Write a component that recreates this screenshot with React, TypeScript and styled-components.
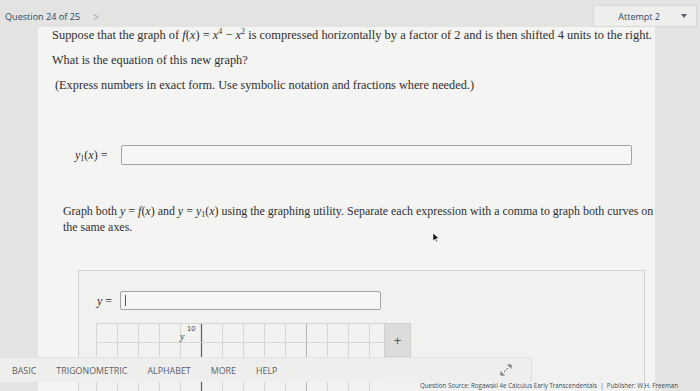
import React from "react";
import styled, { createGlobalStyle } from "styled-components";

const GlobalStyle = createGlobalStyle`
  html, body {
    margin: 0;
    padding: 0;
    width: 700px;
    height: 391px;
    overflow: hidden;
    background: #e3e3e1;
  }
  * { box-sizing: border-box; }
`;

const Page = styled.div`
  position: relative;
  width: 700px;
  height: 391px;
  overflow: hidden;
  display: flex;
  flex-direction: column;
  font-family: "Liberation Serif", "Times New Roman", serif;
  color: #2f2f2f;
`;

const Header = styled.div`
  height: 27px;
  display: flex;
  align-items: center;
  justify-content: space-between;
  padding: 0 3px 0 5px;
  font-family: "Open Sans", "Liberation Sans", sans-serif;
`;

const QuestionNav = styled.div`
  display: flex;
  align-items: center;
  gap: 13px;
  font-size: 9.1px;
  color: #2c4a68;
  padding-top: 6px;
`;

const Chevron = styled.span`
  color: #9aa3ad;
  font-size: 11px;
`;

const AttemptBox = styled.div`
  width: 104px;
  height: 22px;
  margin-top: 5px;
  display: flex;
  align-items: center;
  justify-content: flex-end;
  gap: 21px;
  padding-right: 9px;
  background: #eeeeec;
  border: 1px solid #d8d8d6;
  font-size: 9px;
  color: #2c4a68;
`;

const Caret = styled.span`
  width: 0;
  height: 0;
  border-left: 3px solid transparent;
  border-right: 3px solid transparent;
  border-top: 4px solid #55606b;
`;

const Body = styled.div`
  flex: 1;
  display: flex;
`;

const Gutter = styled.div<{ $w: number }>`
  width: ${(p) => p.$w}px;
  flex-shrink: 0;
`;

const Panel = styled.div`
  width: 617px;
  background: #f4f4f2;
  padding: 0 0 0 14px;
  display: flex;
  flex-direction: column;
`;

const Para = styled.p<{ $mt?: number; $ml?: number; $fs?: number }>`
  margin: ${(p) => p.$mt ?? 0}px 0 0 ${(p) => p.$ml ?? 0}px;
  font-size: ${(p) => p.$fs ?? 12.3}px;
  line-height: 16px;
  height: 16px;
  white-space: nowrap;
`;

const I = styled.i`
  font-style: italic;
`;

const Sup = styled.sup`
  font-size: 8px;
  line-height: 0;
  vertical-align: 0;
  position: relative;
  top: -5px;
`;

const Sub = styled.sub`
  font-size: 8px;
  line-height: 0;
  vertical-align: 0;
  position: relative;
  top: 2px;
`;

const AnswerRow = styled.div`
  margin: 52px 0 0 23px;
  display: flex;
  align-items: center;
  gap: 14px;
`;

const MathLabel = styled.span`
  font-size: 12px;
  line-height: 16px;
  white-space: nowrap;
`;

const Input = styled.div<{ $w: number; $h: number }>`
  width: ${(p) => p.$w}px;
  height: ${(p) => p.$h}px;
  border: 1.5px solid #a3a3a1;
  border-radius: 2px;
  background: #f6f6f4;
  display: flex;
  align-items: center;
  padding-left: 4px;
`;

const TextCaret = styled.span`
  width: 1px;
  height: 11px;
  background: #555;
`;

const GraphText = styled.div`
  margin: 38px 0 0 11px;
`;

const GraphBox = styled.div`
  margin: 35px 0 0 26px;
  width: 567px;
  flex: 1;
  border: 1px solid #d2d2d0;
  border-bottom: none;
  background: #f1f1ef;
  padding: 20px 0 0 17px;
  display: flex;
  flex-direction: column;
`;

const EqRow = styled.div`
  display: flex;
  align-items: center;
  gap: 8px;
  padding-left: 1px;
`;

const GridWrap = styled.div`
  margin-top: 13px;
  display: flex;
`;

const PlusButton = styled.div`
  width: 27px;
  height: 34px;
  background: #dcdcda;
  border: 1px solid #cfcfcd;
  display: flex;
  align-items: center;
  justify-content: center;
  font-family: "Liberation Sans", sans-serif;
  font-size: 13px;
  color: #555;
`;

const Toolbar = styled.div`
  position: absolute;
  left: 0;
  top: 357px;
  width: 532px;
  height: 25px;
  background: #eeeeec;
  border-top: 1px solid #e2e2e0;
  border-right: 1px solid #dcdcda;
  display: flex;
  align-items: center;
  padding: 0 18px 0 12px;
  gap: 20px;
  font-family: "Open Sans", "Liberation Sans", sans-serif;
  font-size: 8.9px;
  color: #5a5f66;
`;

const Spacer = styled.div`
  flex: 1;
`;

const Source = styled.div`
  position: absolute;
  left: 420px;
  top: 381px;
  font-family: "Open Sans", "Liberation Sans", sans-serif;
  font-size: 6.2px;
  color: #3e4a58;
  white-space: nowrap;
`;

const Pointer = styled.svg`
  position: absolute;
  left: 432px;
  top: 232px;
`;

const Grid = () => {
  const cols = 15;
  const cw = 21;
  const w = cols * cw;
  const h = 70;
  const lines = [];
  for (let i = 0; i <= cols; i++) {
    const x = i * cw + 0.5;
    const axis = i === 5;
    const major = i === 10;
    lines.push(
      <line
        key={"v" + i}
        x1={x}
        y1={0}
        x2={x}
        y2={h}
        stroke={axis ? "#5a5a5a" : major ? "#b4b4b2" : "#d6d6d4"}
        strokeWidth={axis ? 1.2 : 1}
      />
    );
  }
  for (let j = 0; j <= 3; j++) {
    const y = j * 19 + 0.5;
    lines.push(<line key={"h" + j} x1={0} y1={y} x2={w} y2={y} stroke="#d6d6d4" />);
  }
  return (
    <svg width={w - 27} height={h} viewBox={`0 0 ${w - 27} ${h}`}>
      <rect x={0} y={0} width={w} height={h} fill="#f2f2f0" />
      {lines}
      <text x={91} y={8} fontSize="7.5" fontFamily="Liberation Sans, sans-serif" fill="#444">10</text>
      <text x={84} y={17} fontSize="10" fontStyle="italic" fontFamily="Liberation Serif, serif" fill="#444">y</text>
    </svg>
  );
};

const ExpandIcon = () => (
  <svg width="14" height="14" viewBox="0 0 14 14" fill="none" stroke="#555" strokeWidth="1">
    <line x1="2.5" y1="11.5" x2="11.5" y2="2.5" strokeDasharray="2 1.5" />
    <path d="M2 8.5 L2 12 L5.5 12" />
    <path d="M8.5 2 L12 2 L12 5.5" />
  </svg>
);

export default function App() {
  return (
    <>
      <GlobalStyle />
      <Page>
        <Header>
          <QuestionNav>
            <span>Question 24 of 25</span>
            <Chevron>&gt;</Chevron>
          </QuestionNav>
          <AttemptBox>
            <span>Attempt 2</span>
            <Caret />
          </AttemptBox>
        </Header>
        <Body>
          <Gutter $w={38} />
          <Panel>
            <Para $fs={12.45}>
              Suppose that the graph of <I>f</I>(<I>x</I>)&nbsp;=&nbsp;<I>x</I>
              <Sup>4</Sup>&nbsp;−&nbsp;<I>x</I>
              <Sup>2</Sup> is compressed horizontally by a factor of 2 and is then shifted 4 units to the
              right.
            </Para>
            <Para $mt={9}>What is the equation of this new graph?</Para>
            <Para $mt={9} $ml={3}>
              (Express numbers in exact form. Use symbolic notation and fractions where needed.)
            </Para>
            <AnswerRow>
              <MathLabel>
                <I>y</I>
                <Sub>1</Sub>(<I>x</I>) =
              </MathLabel>
              <Input $w={511} $h={20} />
            </AnswerRow>
            <GraphText>
              <Para $fs={11.95}>
                Graph both <I>y</I>&nbsp;=&nbsp;<I>f</I>(<I>x</I>) and <I>y</I>&nbsp;=&nbsp;<I>y</I>
                <Sub>1</Sub>(<I>x</I>) using the graphing utility. Separate each expression with a comma to
                graph both curves on
              </Para>
              <Para $fs={11.95}>the same axes.</Para>
            </GraphText>
            <GraphBox>
              <EqRow>
                <MathLabel>
                  <I>y</I> =
                </MathLabel>
                <Input $w={261} $h={19}>
                  <TextCaret />
                </Input>
              </EqRow>
              <GridWrap>
                <Grid />
                <PlusButton>+</PlusButton>
              </GridWrap>
            </GraphBox>
          </Panel>
          <Gutter $w={45} />
        </Body>
        <Toolbar>
          <span>BASIC</span>
          <span>TRIGONOMETRIC</span>
          <span>ALPHABET</span>
          <span>MORE</span>
          <span>HELP</span>
          <Spacer />
          <ExpandIcon />
        </Toolbar>
        <Source>
          Question Source: Rogawski 4e Calculus Early Transcendentals &nbsp;|&nbsp; Publisher: W.H. Freeman
        </Source>
        <Pointer width="8" height="11" viewBox="0 0 8 11">
          <path d="M1 1 L1 9 L3 7 L4.5 10 L5.5 9.5 L4.2 6.6 L7 6.5 Z" fill="#111" stroke="#fff" strokeWidth="0.6" />
        </Pointer>
      </Page>
    </>
  );
}
